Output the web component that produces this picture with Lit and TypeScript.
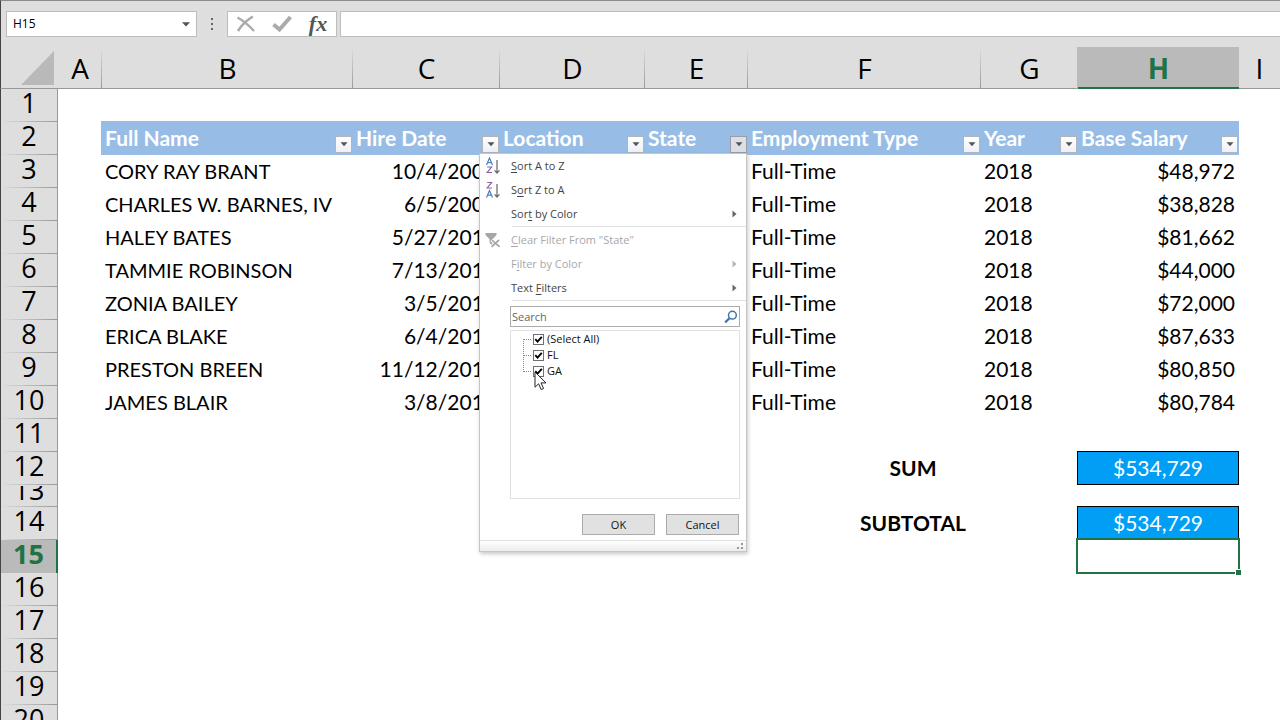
import { LitElement, html, svg, css, nothing } from "lit";
import { customElement, property } from "lit/decorators.js";
import { classMap } from "lit/directives/class-map.js";

interface Employee {
  name: string;
  hired: string;
  type: string;
  year: string;
  salary: string;
}

const EMPLOYEES: Employee[] = [
  { name: "CORY RAY BRANT", hired: "10/4/2009", type: "Full-Time", year: "2018", salary: "$48,972" },
  { name: "CHARLES W. BARNES, IV", hired: "6/5/2009", type: "Full-Time", year: "2018", salary: "$38,828" },
  { name: "HALEY BATES", hired: "5/27/2014", type: "Full-Time", year: "2018", salary: "$81,662" },
  { name: "TAMMIE ROBINSON", hired: "7/13/2015", type: "Full-Time", year: "2018", salary: "$44,000" },
  { name: "ZONIA BAILEY", hired: "3/5/2012", type: "Full-Time", year: "2018", salary: "$72,000" },
  { name: "ERICA BLAKE", hired: "6/4/2012", type: "Full-Time", year: "2018", salary: "$87,633" },
  { name: "PRESTON BREEN", hired: "11/12/2013", type: "Full-Time", year: "2018", salary: "$80,850" },
  { name: "JAMES BLAIR", hired: "3/8/2012", type: "Full-Time", year: "2018", salary: "$80,784" },
];

const COLUMNS = ["A", "B", "C", "D", "E", "F", "G", "H", "I"];
const FIELDS = ["Full Name", "Hire Date", "Location", "State", "Employment Type", "Year", "Base Salary"];
const TOTALS: Record<number, string> = { 12: "SUM", 14: "SUBTOTAL" };

@customElement("filter-menu")
export class FilterMenu extends LitElement {
  static styles = css`
    :host {
      display: block;
      box-sizing: border-box;
      width: 268px;
      background: #fff;
      border: 1px solid #c6c6c6;
      box-shadow: 1px 2px 4px rgba(0, 0, 0, 0.22);
      font: 400 11px/16px "Open Sans", "Noto Sans", sans-serif;
      color: #444;
      text-align: left;
    }
    .item {
      display: flex;
      align-items: center;
      width: 100%;
      height: 24px;
      padding: 0 9px 0 5px;
      border: 0;
      background: none;
      font: inherit;
      color: inherit;
      text-align: left;
    }
    .item:disabled {
      color: #a8a8a8;
    }
    .icon {
      flex: none;
      width: 16px;
      height: 18px;
      margin-right: 10px;
    }
    .label {
      flex: 1;
    }
    u {
      text-underline-offset: 2px;
    }
    .arrow {
      width: 5px;
      height: 8px;
      fill: #666;
    }
    .item:disabled .arrow {
      fill: #b4b4b4;
    }
    .rule {
      height: 1px;
      margin: 0 0 1px 32px;
      border: 0;
      background: #e1e1e1;
    }
    .body {
      margin: 5px 6px 0 30px;
    }
    .search {
      display: flex;
      align-items: center;
      box-sizing: border-box;
      height: 21px;
      border: 1px solid #ababab;
      padding-right: 1px;
    }
    .search input {
      flex: 1;
      min-width: 0;
      padding: 0 1px;
      border: 0;
      outline: 0;
      background: none;
      font: inherit;
      color: #444;
    }
    .search input::placeholder {
      color: #666;
      opacity: 1;
    }
    .values {
      box-sizing: border-box;
      height: 169px;
      margin: 3px 0 0;
      padding: 0 0 0 12px;
      border: 1px solid #e1e1e1;
      list-style: none;
      color: #111;
    }
    .values li {
      position: relative;
      height: 16px;
    }
    .values label {
      display: flex;
      align-items: center;
      height: 16px;
    }
    .branch {
      width: 10px;
      height: 16px;
      flex: none;
    }
    .values input {
      appearance: none;
      flex: none;
      width: 11px;
      height: 11px;
      margin: 0 3px 0 0;
      border: 1px solid #707070;
      background: #fff;
    }
    .values input:checked {
      background: #fff
        url("data:image/svg+xml,%3Csvg xmlns='http://www.w3.org/2000/svg' viewBox='0 0 9 9'%3E%3Cpath d='M1.3 4.2 3.5 6.6 7.8 1.9' fill='none' stroke='%23000' stroke-width='1.9'/%3E%3C/svg%3E");
    }
    .pointer {
      position: absolute;
      left: 11px;
      top: 8px;
      width: 13px;
      height: 20px;
    }
    .actions {
      display: flex;
      justify-content: flex-end;
      gap: 11px;
      margin: 15px 7px 5px 0;
    }
    .actions button {
      box-sizing: border-box;
      width: 73px;
      height: 21px;
      padding: 0;
      border: 1px solid #ababab;
      background: #e1e1e1;
      font: inherit;
      color: #111;
    }
    .grip {
      display: flex;
      justify-content: flex-end;
      align-items: flex-end;
      height: 9px;
      padding: 0 2px 1px 0;
      border-top: 1px solid #e1e1e1;
      background: linear-gradient(#fff, #ececec);
    }
    .grip svg {
      width: 7px;
      height: 7px;
    }
  `;

  private sortIcon(first: "A" | "Z") {
    const a = (y: number) => svg`<path d="M1.5 ${y + 7}L4.5 ${y}L7.5 ${y + 7}M2.6 ${y + 4.7}H6.4" stroke="#4d7fb8"/>`;
    const z = (y: number) => svg`<path d="M2.200 ${y + 0.5}H6.6L2.200 ${y + 6}H7" stroke="#8a62a4"/>`;
    return html`<svg class="icon" viewBox="0 0 16 18" fill="none" stroke-width="1.2" aria-hidden="true">
      ${first === "A" ? a(1) : z(1)} ${first === "A" ? z(9.5) : a(9.5)}
      <path d="M12 3V16M9.6 13.4L12 16L14.4 13.4" stroke="#666" />
    </svg>`;
  }

  private arrow() {
    return html`<svg class="arrow" viewBox="0 0 5 8" aria-hidden="true"><path d="M0.5 0.5L4.5 4L0.5 7.5Z" /></svg>`;
  }

  private value(label: string, index: number, count: number) {
    return html`<li>
      <label>
        <svg class="branch" viewBox="0 0 10 16" aria-hidden="true">
          <path
            d="M0.5 ${index === 0 ? 8 : 0}V${index === count - 1 ? 9 : 16}M1 8.5H9"
            fill="none"
            stroke="#888"
            stroke-dasharray="1 1"
          />
        </svg>
        <input type="checkbox" checked />${label}
      </label>
      ${index === count - 1
        ? html`<svg class="pointer" viewBox="0 0 13 20" aria-hidden="true">
            <path
              d="M1 1V16.2L4.6 12.8L7.2 18.6L9.6 17.5L7 11.9H12Z"
              fill="#fff"
              stroke="#222"
              stroke-width="1"
            />
          </svg>`
        : nothing}
    </li>`;
  }

  render() {
    const blank = html`<span class="icon"></span>`;
    const values = ["(Select All)", "FL", "GA"];
    return html`
      <button class="item">${this.sortIcon("A")}<span class="label"><u>S</u>ort A to Z</span></button>
      <button class="item">${this.sortIcon("Z")}<span class="label">S<u>o</u>rt Z to A</span></button>
      <button class="item">${blank}<span class="label">Sor<u>t</u> by Color</span>${this.arrow()}</button>
      <hr class="rule" />
      <button class="item" disabled>
        <svg class="icon" viewBox="0 0 16 18" aria-hidden="true">
          <path d="M0.5 2H11.5V4L7.6 8.2V14.5L4.6 12V8.2L0.5 4Z" fill="#a6a6a6" />
          <path d="M6.6 9L14.6 16M14.6 8.6L6.6 16" stroke="#fff" stroke-width="3.4" />
          <path d="M7 9.2L14.6 15.8M14 9L6.6 15.8" stroke="#a6a6a6" stroke-width="1.7" />
        </svg>
        <span class="label"><u>C</u>lear Filter From "State"</span>
      </button>
      <button class="item" disabled>${blank}<span class="label">F<u>i</u>lter by Color</span>${this.arrow()}</button>
      <button class="item">${blank}<span class="label">Text <u>F</u>ilters</span>${this.arrow()}</button>
      <hr class="rule" />
      <div class="body">
        <div class="search">
          <input type="text" placeholder="Search" aria-label="Search" />
          <svg width="14" height="14" viewBox="0 0 14 14" fill="none" stroke="#3f74ab" aria-hidden="true">
            <circle cx="8.4" cy="5.2" r="3.9" stroke-width="1.5" />
            <path d="M5.4 8.2L1.2 12.4" stroke-width="2.2" />
          </svg>
        </div>
        <ul class="values">
          ${values.map((v, i) => this.value(v, i, values.length))}
        </ul>
      </div>
      <div class="actions"><button>OK</button><button>Cancel</button></div>
      <div class="grip">
        <svg viewBox="0 0 7 7" fill="#999" aria-hidden="true">
          <path d="M4 0H6V2H4ZM0 4H2V6H0ZM4 4H6V6H4Z" />
        </svg>
      </div>
    `;
  }
}

@customElement("formula-bar")
export class FormulaBar extends LitElement {
  @property() cell = "";

  static styles = css`
    :host {
      display: flex;
      align-items: center;
      box-sizing: border-box;
      height: 47px;
      padding: 0 0 0 5px;
      border-top: 1px solid #8c8c8c;
      border-left: 1px solid #444;
      background: #dedede;
    }
    .box {
      display: flex;
      align-items: center;
      box-sizing: border-box;
      height: 26px;
      border: 1px solid #bdbdbd;
      background: #fff;
    }
    .name {
      width: 191px;
    }
    .name input,
    .formula input {
      flex: 1;
      min-width: 0;
      padding: 0 6px;
      border: 0;
      outline: 0;
      background: none;
      font: 400 12px/16px "Open Sans", "Noto Sans", sans-serif;
      color: #000;
    }
    button {
      display: flex;
      align-items: center;
      justify-content: center;
      height: 24px;
      padding: 0;
      border: 0;
      background: none;
    }
    .drop {
      width: 20px;
    }
    .dots {
      width: 30px;
      display: flex;
      justify-content: center;
    }
    .tools {
      width: 110px;
      margin-right: 3px;
    }
    .tools button {
      flex: 1;
    }
    .formula {
      flex: 1;
      border-right: 0;
    }
    .fx {
      font: italic 700 22px/24px "Liberation Serif", serif;
      color: #555;
    }
  `;

  render() {
    return html`
      <div class="box name">
        <input type="text" aria-label="Name box" .value=${this.cell} />
        <button class="drop" aria-label="Named cells">
          <svg width="8" height="5" viewBox="0 0 8 5"><path d="M0 0.200H8L4 4.400Z" fill="#555" /></svg>
        </button>
      </div>
      <span class="dots">
        <svg width="2" height="12" viewBox="0 0 2 12" fill="#666"><path d="M0 0H2V2H0ZM0 5H2V7H0ZM0 10H2V12H0Z" /></svg>
      </span>
      <div class="box tools">
        <button aria-label="Cancel">
          <svg width="20" height="18" viewBox="0 0 20 18" fill="none" stroke="#ababab">
            <path d="M1.500 2.500C8 6 13 10.500 18 16" stroke-width="2.400" />
            <path d="M16.800 1.500C10.500 5.500 5.500 10 2 16" stroke-width="2.600" />
          </svg>
        </button>
        <button aria-label="Enter">
          <svg width="20" height="18" viewBox="0 0 20 18" fill="none" stroke="#ababab">
            <path d="M1.500 9.500L7.500 14.500L18.500 2" stroke-width="4" />
          </svg>
        </button>
        <button class="fx" aria-label="Insert function">fx</button>
      </div>
      <div class="box formula"><input type="text" aria-label="Formula" /></div>
    `;
  }
}

@customElement("app-root")
export class AppRoot extends LitElement {
  static styles = css`
    :host {
      display: block;
      box-sizing: border-box;
      height: 100vh;
      overflow: hidden;
      background: #fff;
      font: 400 21px/32px Lato, "Open Sans", sans-serif;
      color: #000;
    }
    table {
      width: 100%;
      table-layout: fixed;
      border-collapse: separate;
      border-spacing: 0;
    }
    th,
    td {
      padding: 0;
      white-space: nowrap;
      vertical-align: top;
      text-align: left;
    }
    .c-head { width: 58px; }
    .c-a { width: 44px; }
    .c-b { width: 251px; }
    .c-c { width: 147px; }
    .c-d { width: 145px; }
    .c-e { width: 103px; }
    .c-f { width: 233px; }
    .c-g { width: 97px; }
    .c-h { width: 161px; }

    .corner,
    .letter,
    .number {
      box-sizing: border-box;
      background: #dedede;
      font: 400 28px/32px "Open Sans", "Noto Sans", sans-serif;
      text-align: center;
    }
    .corner,
    .number {
      border-left: 1px solid #444;
    }
    .corner,
    .letter {
      height: 42px;
      border-bottom: 1px solid #999;
    }
    .letter {
      padding: 5px 0 0;
      background: #dedede linear-gradient(#dedede, #999) right / 1px 100% no-repeat;
    }
    .letter:last-child {
      background: #dedede;
    }
    .letter.current {
      border-bottom: 2px solid #217346;
      background: #bababa;
      box-shadow: -1px 0 #bababa;
      color: #217346;
      font-weight: 700;
    }
    .corner svg {
      display: block;
      margin: 4px 0 0 20px;
    }
    .number {
      border-right: 1px solid #999;
      background: #dedede linear-gradient(to right, #dedede, #999) bottom / 100% 1px no-repeat;
      font-size: 27px;
      line-height: 28px;
    }
    .number div {
      height: 33px;
    }
    .number.current {
      border-right: 2px solid #217346;
      background: #bababa;
      color: #217346;
      font-weight: 700;
    }
    .short .number div {
      display: flex;
      align-items: flex-end;
      justify-content: center;
      height: 18px;
      margin-top: 1px;
      padding-bottom: 3px;
      overflow: hidden;
    }
    .field {
      position: relative;
      color: #fff;
      font-weight: 700;
    }
    .caption {
      display: flex;
      align-items: flex-end;
      justify-content: space-between;
      height: 34px;
      margin: -1px 0 0 -1px;
      padding: 0 1px 0 4px;
      box-sizing: border-box;
      background: #97bde6;
    }
    .caption span {
      height: 33px;
    }
    .filter {
      display: flex;
      align-items: center;
      justify-content: center;
      flex: none;
      box-sizing: border-box;
      width: 17px;
      height: 17px;
      margin: 0 0 2px;
      padding: 0;
      border: 1px solid #b0b4bc;
      background: linear-gradient(#fff, #eef0f6);
    }
    .filter.open {
      background: #dcdfe6;
      border-color: #9a9ea6;
    }
    .menu {
      position: absolute;
      z-index: 2;
      top: 31px;
      right: 1px;
    }
    .text {
      padding-left: 3px;
    }
    .name {
      font-size: 20px;
    }
    .amount {
      padding-right: 4px;
      text-align: right;
    }
    .total {
      text-align: center;
      font-weight: 700;
    }
    .sum {
      box-sizing: border-box;
      height: 34px;
      margin: -1px 0 0 -1px;
      border: 1px solid #000;
      background: #009ff5;
      color: #fff;
      text-align: center;
    }
    .selected {
      position: relative;
    }
    .ring {
      position: absolute;
      inset: -2px -1px -1px -2px;
      border: 2px solid #217346;
    }
    .handle {
      position: absolute;
      right: -4px;
      bottom: -4px;
      width: 5px;
      height: 5px;
      border: 1px solid #fff;
      background: #217346;
    }
  `;

  private field(name: string) {
    const open = name === "State";
    return html`<th class="field" scope="col">
      <div class="caption">
        <span>${name}</span>
        <button class=${classMap({ filter: true, open })} aria-label="Filter ${name}">
          <svg width="8" height="5" viewBox="0 0 8 5"><path d="M0.5 0.3H7.5L4 4.300Z" fill="#555" /></svg>
        </button>
      </div>
      ${open ? html`<filter-menu class="menu"></filter-menu>` : nothing}
    </th>`;
  }

  private cells(row: number) {
    if (row === 2) return html`<td></td>${FIELDS.map((f) => this.field(f))}<td></td>`;
    const e = EMPLOYEES[row - 3];
    if (e) {
      return html`<td></td>
        <td class="text name">${e.name}</td>
        <td class="amount">${e.hired}</td>
        <td></td>
        <td></td>
        <td class="text">${e.type}</td>
        <td class="text">${e.year}</td>
        <td class="amount">${e.salary}</td>
        <td></td>`;
    }
    if (TOTALS[row]) {
      return html`<td colspan="5"></td>
        <td class="total" colspan="2">${TOTALS[row]}</td>
        <td><div class="sum">$534,729</div></td>
        <td></td>`;
    }
    if (row === 15) {
      return html`<td colspan="7"></td>
        <td class="selected"><div class="ring"><span class="handle"></span></div></td>
        <td></td>`;
    }
    return html`<td colspan="9"></td>`;
  }

  render() {
    const rows = Array.from({ length: 20 }, (_, i) => i + 1);
    return html`
      <formula-bar cell="H15"></formula-bar>
      <table>
        <colgroup>
          <col class="c-head" />
          ${COLUMNS.map((c) => html`<col class="c-${c.toLowerCase()}" />`)}
        </colgroup>
        <thead>
          <tr>
            <td class="corner">
              <svg width="34" height="34" viewBox="0 0 34 34"><path d="M33 0V34H0Z" fill="#b9b9b9" /></svg>
            </td>
            ${COLUMNS.map(
              (c) => html`<th class=${classMap({ letter: true, current: c === "H" })} scope="col">${c}</th>`
            )}
          </tr>
        </thead>
        <tbody>
          ${rows.map(
            (r) => html`<tr class=${classMap({ short: r === 13 })}>
              <th class=${classMap({ number: true, current: r === 15 })} scope="row">
                <div>${r}</div>
              </th>
              ${this.cells(r)}
            </tr>`
          )}
        </tbody>
      </table>
    `;
  }
}
